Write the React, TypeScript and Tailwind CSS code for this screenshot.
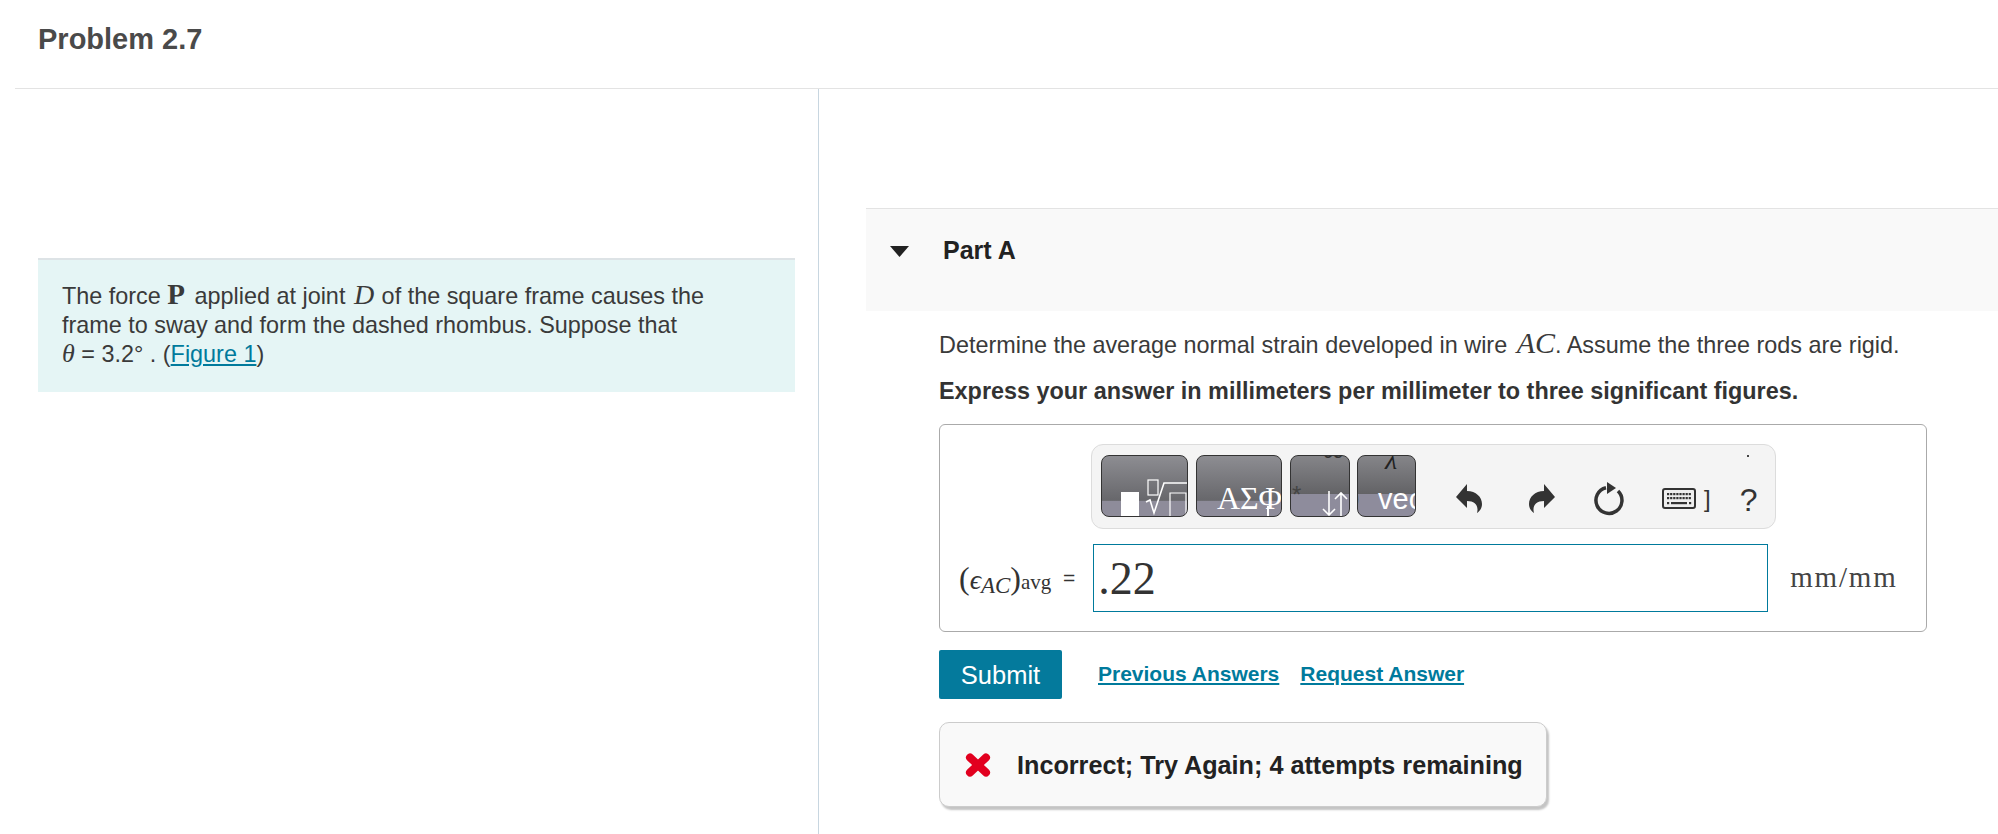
import React from "react";

const wide = "relative h-[62px] overflow-hidden rounded-[8px] border border-[#333] bg-[linear-gradient(#8d8d92_0%,#67676b_74%,#8e8c9a_75%,#8e8c9a_100%)]";
const narrow = "relative h-[62px] overflow-hidden rounded-[8px] border border-[#333] bg-[linear-gradient(#858589_0%,#636366_63%,#8e8c9c_64%,#8e8c9c_100%)]";
const serif = "font-['Liberation_Serif',serif]";

function Undo({ flip }: { flip?: boolean }) {
  return (
    <svg width="26" height="29" viewBox="0 0 26 29" className={flip ? "-scale-x-100" : ""}>
      <path d="M0 13 L11 0 L11 7 C20 7 26 13 26 20 C26 24 24 27 21 29 C23 22 19 17 11 17 L11 24 Z" fill="#333" />
    </svg>
  );
}

function Reset() {
  return (
    <svg width="32" height="34" viewBox="0 0 32 34">
      <path d="M13 5.700 A13 13 0 1 0 25 9" fill="none" stroke="#333" strokeWidth="3.500" />
      <path d="M14 0 L23 6 L14 12 Z" fill="#333" />
    </svg>
  );
}

function Keyboard() {
  const keys = [];
  for (let i = 0; i < 8; i++) keys.push(<rect key={"a" + i} x={5 + i * 3.100} y="5" width="2.200" height="2.200" fill="#333" />);
  for (let i = 0; i < 8; i++) keys.push(<rect key={"b" + i} x={5 + i * 3.100} y="9" width="2.200" height="2.200" fill="#333" />);
  return (
    <svg width="34" height="21" viewBox="0 0 34 21">
      <rect x="1" y="1" width="32" height="19" rx="2" fill="#eeeeee" stroke="#333" strokeWidth="2" />
      {keys}
      <rect x="5" y="14" width="2.200" height="2.200" fill="#333" />
      <rect x="9" y="14" width="16" height="2.200" fill="#333" />
      <rect x="27" y="14" width="2.200" height="2.200" fill="#333" />
    </svg>
  );
}

export default function App() {
  return (
    <div className="flex h-[834px] w-[1998px] flex-col overflow-hidden bg-white font-['Liberation_Sans',Arial,sans-serif] text-[#333]">
      <header className="ml-[15px] flex h-[89px] items-start border-b border-[#e3e3e3] pl-[23px] pt-[21px]">
        <h1 className="text-[29px] font-bold leading-[36px] text-[#4a4a4a]">Problem 2.7</h1>
      </header>

      <div className="flex flex-1">
        <aside className="w-[819px] shrink-0 border-r border-[#c8d6e0] pl-[38px] pr-[23px] pt-[169px]">
          <div className="h-[134px] border-t-2 border-[#dde3e6] bg-[#e5f5f5] px-[24px] pt-[22px] text-[23.400px] leading-[29px] text-[#3a3a3a]">
            <p>
              The force <b className={`${serif} mr-[3px] text-[29px] leading-[20px]`}>P</b> applied at joint <i className={`${serif} ml-[2px] mr-[1px] text-[28px] leading-[20px]`}>D</i> of the square frame causes the
              <br />
              frame to sway and form the dashed rhombus. Suppose that
              <br />
              <i className={`${serif} text-[26px] leading-[20px]`}>θ</i> = 3.2° . (<a className="text-[#007a9c] underline">Figure 1</a>)
            </p>
          </div>
        </aside>

        <main className="min-w-0 flex-1 pl-[47px] pt-[119px]">
          <div className="flex h-[103px] items-start border-t border-[#e3e3e3] bg-[#f9f9f9] pl-[24px] pt-[25px]">
            <svg width="19" height="11" viewBox="0 0 19 11" className="mt-[12px]">
              <path d="M0 0 H19 L9.500 11 Z" fill="#222" />
            </svg>
            <h2 className="ml-[34px] text-[25px] font-bold leading-[32px] text-[#222]">Part A</h2>
          </div>

          <div className="pl-[73px]">
            <p className="mt-[18px] text-[23.400px] leading-[32px] text-[#3a3a3a]">
              Determine the average normal strain developed in wire <i className={`${serif} ml-[3px] text-[30px] leading-[20px]`}>AC</i>. Assume the three rods are rigid.
            </p>
            <p className="mt-[14px] text-[23.400px] font-bold leading-[32px] text-[#333]">Express your answer in millimeters per millimeter to three significant figures.</p>

            <div className="mt-[17px] h-[208px] w-[988px] rounded-[6px] border border-[#aaa] pt-[19px]">
              <div className="relative ml-[151px] flex h-[85px] w-[685px] items-start rounded-[12px] border border-[#dcdcdc] bg-[#f4f4f4] pl-[9px] pt-[10px]">
                <span className="absolute right-[26px] top-[10px] h-[2px] w-[2px] bg-[#444]" />
                <div className={`${wide} w-[87px]`}>
                  <span className="absolute bottom-0 left-[19px] h-[24px] w-[18px] bg-white" />
                  <svg width="42" height="44" viewBox="0 0 42 44" className="absolute bottom-0 right-0">
                    <rect x="3" y="8" width="10" height="15" fill="none" stroke="#fff" strokeWidth="1.200" />
                    <path d="M1 30 L5 28 L9 41 L19 11 H42" fill="none" stroke="#fff" strokeWidth="1.600" />
                    <path d="M25 44 V21 H41 V44" fill="none" stroke="#fff" strokeWidth="1.200" />
                  </svg>
                </div>
                <div className={`${wide} ml-[8px] w-[86px]`}>
                  <span className={`${serif} absolute bottom-[0px] right-[-1px] text-[32px] leading-[36px] text-white`}>ΑΣΦ</span>
                  <span className="absolute bottom-0 right-[12px] h-[10px] w-[2px] bg-white" />
                </div>
                <div className={`${narrow} ml-[8px] w-[60px]`}>
                  <span className={`${serif} absolute right-[5px] top-[-20px] text-[30px] leading-[30px] text-[#333]`}>∞</span>
                  <span className="absolute left-[1px] top-[27px] text-[24px] leading-[24px] text-[#444]">*</span>
                  <svg width="26" height="25" viewBox="0 0 26 25" className="absolute bottom-0 right-[1px]" fill="none" stroke="#fff" strokeWidth="1.600">
                    <path d="M7 0 V24 M1 18 L7 24 L13 18" />
                    <path d="M19 25 V2 M13 8 L19 2 L25 8" />
                  </svg>
                </div>
                <div className={`${narrow} ml-[7px] w-[59px]`}>
                  <i className={`${serif} absolute left-[27px] top-[-10px] text-[28px] leading-[28px] text-[#222]`}>λ</i>
                  <span className={`${serif} absolute bottom-[3px] left-[-8px] text-[28px] leading-[32px] text-[#444]`}>)</span>
                  <span className="absolute bottom-[0px] left-[20px] text-[29px] leading-[34px] text-white">vec</span>
                </div>
                <div className="ml-[40px] mt-[29px]"><Undo /></div>
                <div className="ml-[47px] mt-[29px]"><Undo flip /></div>
                <div className="ml-[38px] mt-[27px]"><Reset /></div>
                <div className="ml-[37px] mt-[33px]"><Keyboard /></div>
                <span className="ml-[8px] mt-[30px] text-[24px] font-light leading-[28px] text-[#333]">]</span>
                <span className="ml-[29px] mt-[28px] text-[32px] leading-[34px] text-[#333]">?</span>
              </div>

              <div className="mt-[15px] flex h-[68px] items-center">
                <div className={`${serif} ml-[19px] flex w-[105px] items-baseline whitespace-nowrap text-[#333]`}>
                  <span className="text-[32px]">(</span>
                  <i className="text-[28px]">ϵ</i>
                  <i className="translate-y-[4px] text-[23px] leading-none">AC</i>
                  <span className="text-[32px]">)</span>
                  <span className="text-[21px]">avg</span>
                </div>
                <span className="ml-[-1px] text-[21px] text-[#333]">=</span>
                <div className={`${serif} ml-[18px] flex h-[68px] w-[675px] items-center border border-[#007a9c] pl-[4px] text-[46px] text-[#333]`}>.22</div>
                <span className={`${serif} ml-[22px] text-[29px] tracking-[1.800px] text-[#444]`}>mm/mm</span>
              </div>
            </div>

            <div className="mt-[18px] flex items-start">
              <button className="h-[49px] w-[123px] rounded-[2px] bg-[#047a9c] pt-[2px] text-[25.500px] text-white">Submit</button>
              <a className="ml-[36px] mt-[10px] text-[21px] font-bold leading-[28px] text-[#007a9c] underline">Previous Answers</a>
              <a className="ml-[21px] mt-[10px] text-[21px] font-bold leading-[28px] text-[#007a9c] underline">Request Answer</a>
            </div>

            <div className="mt-[23px] flex h-[85px] w-[608px] items-center rounded-[10px] border border-[#ccc] bg-[#f9f9f9] pl-[25px] pt-[1px] shadow-[2px_3px_2px_#c4c4c4]">
              <svg width="26" height="24" viewBox="0 0 26 24">
                <path d="M5 4.500 L21 19.500 M21 4.500 L5 19.500" stroke="#e2001f" strokeWidth="8" strokeLinecap="round" />
              </svg>
              <span className="ml-[26px] text-[25.200px] font-bold leading-[32px] text-[#222]">Incorrect; Try Again; 4 attempts remaining</span>
            </div>
          </div>
        </main>
      </div>
    </div>
  );
}
